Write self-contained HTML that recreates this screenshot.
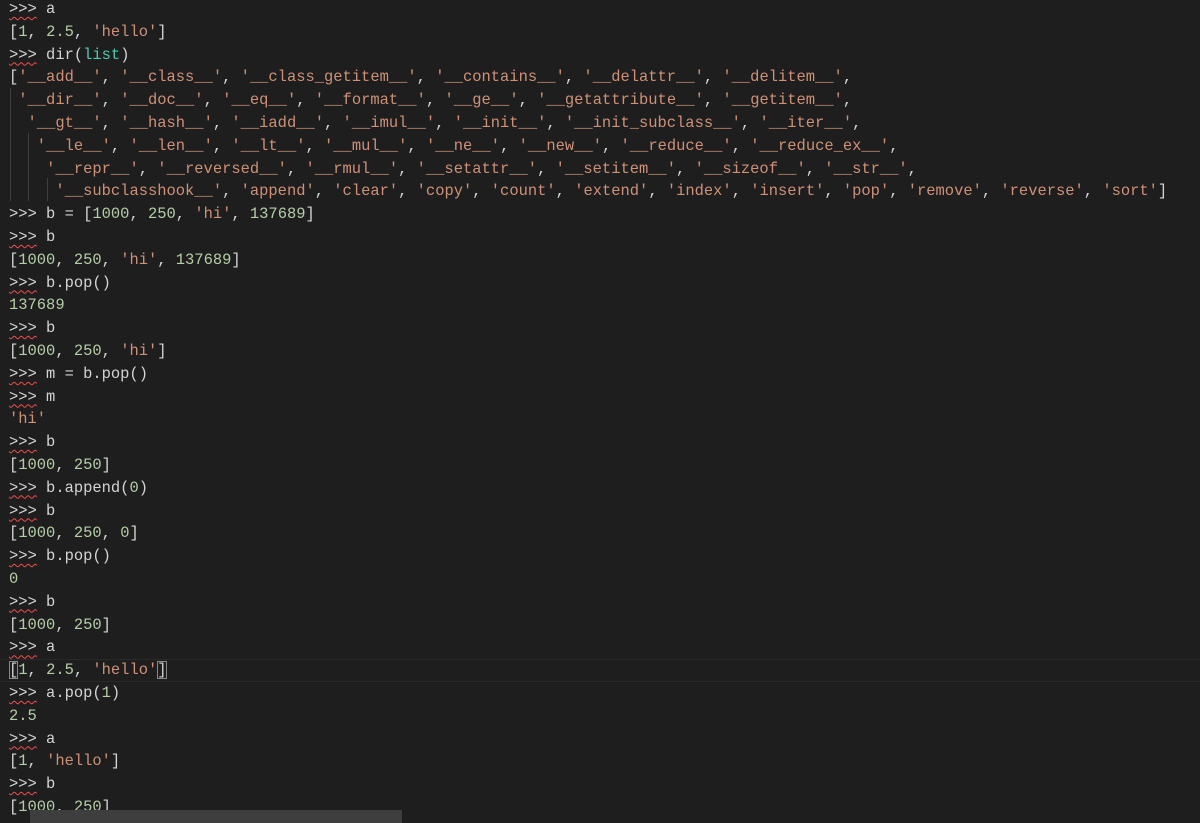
<!DOCTYPE html>
<html><head><style>
html,body{margin:0;padding:0;background:#1e1e1e;width:1200px;height:823px;overflow:hidden}
pre{margin:0;position:absolute;left:9px;top:-2px;font-family:"Liberation Mono",monospace;font-size:15.45px;line-height:22.8px;color:#d4d4d4}
.s{color:#ce9178}.n{color:#b5cea8}.t{color:#4ec9b0}
.p{text-decoration:underline wavy #f14c4c;text-decoration-thickness:1px;text-underline-offset:3px}
.g{position:absolute;width:1px;background:#404040}
.cur{position:absolute;left:0;width:1200px;top:659px;height:21px;border-top:1px solid #2a2a2a;border-bottom:1px solid #2a2a2a}
.bm{outline:1px solid #888;outline-offset:-1px}
.sb{position:absolute;left:30px;top:810px;width:372px;height:13px;background:#3e3e3e}
</style></head><body>
<div class="cur"></div>
<div class="g" style="left:10px;top:88px;height:113px"></div>
<div class="g" style="left:28px;top:133px;height:68px"></div>
<div class="g" style="left:47px;top:178px;height:23px"></div>
<pre><span class="p">&gt;&gt;&gt;</span> a
[<span class="n">1</span>, <span class="n">2.5</span>, <span class="s">'hello'</span>]
<span class="p">&gt;&gt;&gt;</span> dir(<span class="t">list</span>)
[<span class="s">'__add__'</span>, <span class="s">'__class__'</span>, <span class="s">'__class_getitem__'</span>, <span class="s">'__contains__'</span>, <span class="s">'__delattr__'</span>, <span class="s">'__delitem__'</span>,
 <span class="s">'__dir__'</span>, <span class="s">'__doc__'</span>, <span class="s">'__eq__'</span>, <span class="s">'__format__'</span>, <span class="s">'__ge__'</span>, <span class="s">'__getattribute__'</span>, <span class="s">'__getitem__'</span>,
  <span class="s">'__gt__'</span>, <span class="s">'__hash__'</span>, <span class="s">'__iadd__'</span>, <span class="s">'__imul__'</span>, <span class="s">'__init__'</span>, <span class="s">'__init_subclass__'</span>, <span class="s">'__iter__'</span>,
   <span class="s">'__le__'</span>, <span class="s">'__len__'</span>, <span class="s">'__lt__'</span>, <span class="s">'__mul__'</span>, <span class="s">'__ne__'</span>, <span class="s">'__new__'</span>, <span class="s">'__reduce__'</span>, <span class="s">'__reduce_ex__'</span>,
    <span class="s">'__repr__'</span>, <span class="s">'__reversed__'</span>, <span class="s">'__rmul__'</span>, <span class="s">'__setattr__'</span>, <span class="s">'__setitem__'</span>, <span class="s">'__sizeof__'</span>, <span class="s">'__str__'</span>,
     <span class="s">'__subclasshook__'</span>, <span class="s">'append'</span>, <span class="s">'clear'</span>, <span class="s">'copy'</span>, <span class="s">'count'</span>, <span class="s">'extend'</span>, <span class="s">'index'</span>, <span class="s">'insert'</span>, <span class="s">'pop'</span>, <span class="s">'remove'</span>, <span class="s">'reverse'</span>, <span class="s">'sort'</span>]
&gt;&gt;&gt; b = [<span class="n">1000</span>, <span class="n">250</span>, <span class="s">'hi'</span>, <span class="n">137689</span>]
<span class="p">&gt;&gt;&gt;</span> b
[<span class="n">1000</span>, <span class="n">250</span>, <span class="s">'hi'</span>, <span class="n">137689</span>]
<span class="p">&gt;&gt;&gt;</span> b.pop()
<span class="n">137689</span>
<span class="p">&gt;&gt;&gt;</span> b
[<span class="n">1000</span>, <span class="n">250</span>, <span class="s">'hi'</span>]
<span class="p">&gt;&gt;&gt;</span> m = b.pop()
<span class="p">&gt;&gt;&gt;</span> m
<span class="s">'hi'</span>
<span class="p">&gt;&gt;&gt;</span> b
[<span class="n">1000</span>, <span class="n">250</span>]
<span class="p">&gt;&gt;&gt;</span> b.append(<span class="n">0</span>)
<span class="p">&gt;&gt;&gt;</span> b
[<span class="n">1000</span>, <span class="n">250</span>, <span class="n">0</span>]
<span class="p">&gt;&gt;&gt;</span> b.pop()
<span class="n">0</span>
<span class="p">&gt;&gt;&gt;</span> b
[<span class="n">1000</span>, <span class="n">250</span>]
<span class="p">&gt;&gt;&gt;</span> a
<span class="bm">[</span><span class="n">1</span>, <span class="n">2.5</span>, <span class="s">'hello'</span><span class="bm">]</span>
<span class="p">&gt;&gt;&gt;</span> a.pop(<span class="n">1</span>)
<span class="n">2.5</span>
<span class="p">&gt;&gt;&gt;</span> a
[<span class="n">1</span>, <span class="s">'hello'</span>]
<span class="p">&gt;&gt;&gt;</span> b
[<span class="n">1000</span>, <span class="n">250</span>]</pre>
<div class="sb"></div>
</body></html>
